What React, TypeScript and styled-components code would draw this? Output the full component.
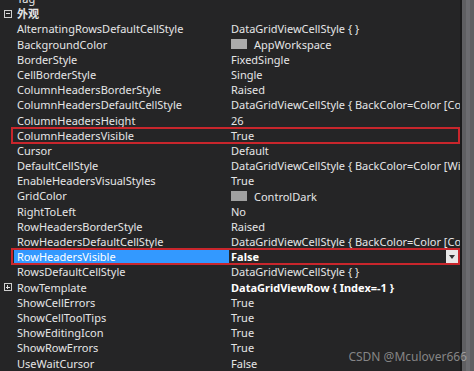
import React from 'react';
import styled, { createGlobalStyle } from 'styled-components';

const Global = createGlobalStyle`
  html, body {
    margin: 0;
    padding: 0;
    background: #252526;
  }
`;

type Prop = {
  name: string;
  value?: string;
  swatch?: string;
  bold?: boolean;
  expand?: boolean;
  category?: boolean;
  marked?: boolean;
  selected?: boolean;
};

const props: Prop[] = [
  { name: 'Tag', value: '' },
  { name: '外观', category: true },
  { name: 'AlternatingRowsDefaultCellStyle', value: 'DataGridViewCellStyle { }' },
  { name: 'BackgroundColor', value: 'AppWorkspace', swatch: '#ababab' },
  { name: 'BorderStyle', value: 'FixedSingle' },
  { name: 'CellBorderStyle', value: 'Single' },
  { name: 'ColumnHeadersBorderStyle', value: 'Raised' },
  { name: 'ColumnHeadersDefaultCellStyle', value: 'DataGridViewCellStyle { BackColor=Color [Control] }' },
  { name: 'ColumnHeadersHeight', value: '26' },
  { name: 'ColumnHeadersVisible', value: 'True', marked: true },
  { name: 'Cursor', value: 'Default' },
  { name: 'DefaultCellStyle', value: 'DataGridViewCellStyle { BackColor=Color [Window] }' },
  { name: 'EnableHeadersVisualStyles', value: 'True' },
  { name: 'GridColor', value: 'ControlDark', swatch: '#a0a0a0' },
  { name: 'RightToLeft', value: 'No' },
  { name: 'RowHeadersBorderStyle', value: 'Raised' },
  { name: 'RowHeadersDefaultCellStyle', value: 'DataGridViewCellStyle { BackColor=Color [Control] }' },
  { name: 'RowHeadersVisible', value: 'False', bold: true, marked: true, selected: true },
  { name: 'RowsDefaultCellStyle', value: 'DataGridViewCellStyle { }' },
  { name: 'RowTemplate', value: 'DataGridViewRow { Index=-1 }', bold: true, expand: true },
  { name: 'ShowCellErrors', value: 'True' },
  { name: 'ShowCellToolTips', value: 'True' },
  { name: 'ShowEditingIcon', value: 'True' },
  { name: 'ShowRowErrors', value: 'True' },
  { name: 'UseWaitCursor', value: 'False' },
];

const Frame = styled.div`
  position: relative;
  width: 474px;
  height: 371px;
  overflow: hidden;
  display: flex;
  background: #252526;
  font-family: 'Noto Sans', 'Noto Sans CJK SC', sans-serif;
  font-size: 11px;
  color: #e6e6e6;
`;

const List = styled.div`
  flex: 1;
  display: flex;
  flex-direction: column;
  margin-top: -9px;
`;

const Row = styled.div<{ $marked?: boolean }>`
  position: relative;
  flex: 0 0 15.2px;
  height: 15.2px;
  display: grid;
  grid-template-columns: 14px 215px 1fr;
  align-items: center;
  line-height: 15px;
  white-space: nowrap;

  &::after {
    content: '';
    display: ${(p) => (p.$marked ? 'block' : 'none')};
    position: absolute;
    left: 11px;
    right: 0;
    top: -1px;
    bottom: -1px;
    border: 2px solid #c9262c;
    pointer-events: none;
  }
`;

const Gutter = styled.div`
  display: flex;
  align-items: center;
  justify-content: center;
  height: 100%;
  padding-left: 1px;
`;

const Toggle = styled.span<{ $open?: boolean }>`
  position: relative;
  width: 8px;
  height: 8px;
  border: 1px solid #cfcfcf;
  box-sizing: border-box;

  &::before {
    content: '';
    position: absolute;
    left: 1px;
    right: 1px;
    top: 2.5px;
    height: 1px;
    background: #e0e0e0;
  }

  &::after {
    content: '';
    display: ${(p) => (p.$open ? 'none' : 'block')};
    position: absolute;
    top: 1px;
    bottom: 1px;
    left: 2.5px;
    width: 1px;
    background: #e0e0e0;
  }
`;

const Name = styled.div<{ $selected?: boolean; $category?: boolean }>`
  height: 100%;
  padding-left: 3px;
  overflow: hidden;
  background: ${(p) => (p.$selected ? '#3399ff' : 'transparent')};
  color: ${(p) => (p.$selected ? '#ffffff' : '#e6e6e6')};
  font-weight: ${(p) => (p.$category ? 700 : 400)};
`;

const Value = styled.div<{ $bold?: boolean }>`
  position: relative;
  height: 100%;
  display: flex;
  align-items: center;
  gap: 7px;
  padding-left: 2px;
  overflow: hidden;
  color: ${(p) => (p.$bold ? '#ffffff' : '#e6e6e6')};
  font-weight: ${(p) => (p.$bold ? 700 : 400)};
`;

const Swatch = styled.span<{ $color: string }>`
  flex: 0 0 16px;
  height: 10px;
  background: ${(p) => p.$color};
`;

const DropButton = styled.span`
  position: absolute;
  right: 2px;
  top: 1px;
  width: 12px;
  height: 13px;
  background: #e8e8e8;
  display: flex;
  align-items: center;
  justify-content: center;
`;

const ScrollBar = styled.div`
  flex: 0 0 14px;
  border-left: 2px solid #1b1b1c;
  box-sizing: border-box;
  background: #5f5f62;
  display: flex;
  justify-content: center;
`;

const Thumb = styled.div`
  width: 4px;
  background: #6c6c70;
`;

const Watermark = styled.div`
  position: absolute;
  right: 7px;
  bottom: 6px;
  font-family: 'Noto Sans', sans-serif;
  font-size: 12px;
  color: rgba(200, 200, 200, 0.6);
`;

export default function App() {
  return (
    <>
      <Global />
      <Frame>
        <List>
          {props.map((p) => (
            <Row key={p.name} $marked={p.marked}>
              <Gutter>
                {p.category && <Toggle $open />}
                {p.expand && <Toggle />}
              </Gutter>
              <Name $selected={p.selected} $category={p.category}>
                {p.name}
              </Name>
              <Value $bold={p.bold}>
                {p.swatch && <Swatch $color={p.swatch} />}
                {p.value}
                {p.selected && (
                  <DropButton>
                    <svg width="6" height="4" viewBox="0 0 6 4">
                      <path d="M0 0 L6 0 L3 4 Z" fill="#333" />
                    </svg>
                  </DropButton>
                )}
              </Value>
            </Row>
          ))}
        </List>
        <ScrollBar>
          <Thumb />
        </ScrollBar>
        <Watermark>CSDN @Mculover666</Watermark>
      </Frame>
    </>
  );
}
